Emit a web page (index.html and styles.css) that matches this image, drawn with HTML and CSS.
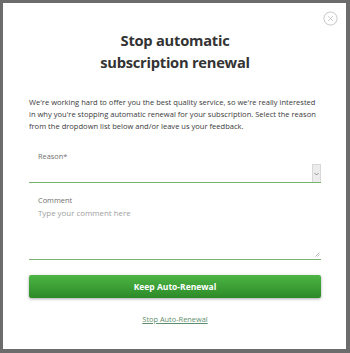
FILE: index.html
```html
<!DOCTYPE html>
<html>
<head>
<meta charset="utf-8">
<link rel="stylesheet" href="styles.css">
</head>
<body>
<div class="page">
  <div class="modal">
    <button class="close" aria-label="Close">
      <svg width="15" height="15" viewBox="0 0 15 15"><circle cx="7.5" cy="7.5" r="6.6" fill="none" stroke="#c8c8c8" stroke-width="1"/><path d="M5.2 5.2 L9.8 9.8 M9.8 5.2 L5.2 9.8" stroke="#c8c8c8" stroke-width="1" fill="none"/></svg>
    </button>
    <h1 class="title">Stop automatic<br>subscription renewal</h1>
    <p class="intro">We're working hard to offer you the best quality service, so we're really interested in why you're stopping automatic renewal for your subscription. Select the reason from the dropdown list below and/or leave us your feedback.</p>
    <div class="field select-field">
      <div class="label">Reason*</div>
      <div class="arrow"><svg width="5" height="4" viewBox="0 0 5 4"><path d="M0.5 1 L2.5 3 L4.5 1" fill="none" stroke="#888" stroke-width="0.9"/></svg></div>
    </div>
    <div class="field text-field">
      <div class="label">Comment</div>
      <div class="placeholder">Type your comment here</div>
      <div class="grip"><svg width="5" height="5" viewBox="0 0 5 5"><path d="M4.5 0.5 L0.5 4.5 M4.5 2.5 L2.5 4.5" stroke="#aaa" stroke-width="0.8"/></svg></div>
    </div>
    <button class="keep">Keep Auto-Renewal</button>
    <a class="stop" href="#">Stop Auto-Renewal</a>
  </div>
</div>
</body>
</html>
```
FILE: styles.css
```css
html, body {
  margin: 0;
  padding: 0;
}
body {
  background: #6c6c6c;
  width: 350px;
  height: 353px;
  overflow: hidden;
  font-family: "Open Sans", "Noto Sans", sans-serif;
}
.page {
  padding: 3px 4px 4px 3px;
}
.modal {
  position: relative;
  background: #fff;
  width: 343px;
  height: 346px;
  box-sizing: border-box;
  padding: 26px 25px 0 26px;
  display: flex;
  flex-direction: column;
}
.close {
  position: absolute;
  top: 8px;
  right: 8px;
  width: 15px;
  height: 15px;
  padding: 0;
  border: 0;
  background: none;
  display: flex;
}
.title {
  margin: 0;
  text-align: center;
  font-weight: 700;
  font-size: 14.7px;
  line-height: 22px;
  color: #333;
  letter-spacing: -0.25px;
}
.intro {
  margin: 23px 0 0 0;
  font-size: 7.55px;
  line-height: 12px;
  color: #3a3a3a;
}
.field {
  position: relative;
  border-bottom: 1px solid #7ab36f;
}
.select-field {
  margin-top: 15px;
  height: 35px;
}
.label {
  padding: 12px 0 0 9px;
  font-size: 7.4px;
  line-height: 10px;
  color: #707070;
}
.select-field .label {
  padding-top: 4px;
}
.arrow {
  position: absolute;
  right: 0;
  bottom: 0;
  width: 9px;
  height: 18px;
  background: #ececec;
  border: 1px solid #d8d8d8;
  border-bottom: 0;
  box-sizing: border-box;
  display: flex;
  align-items: center;
  justify-content: center;
}
.text-field {
  height: 76px;
}
.placeholder {
  padding: 3px 0 0 9px;
  font-size: 7.9px;
  line-height: 10px;
  color: #a0a0a0;
}
.grip {
  position: absolute;
  right: 1px;
  bottom: 2px;
  display: flex;
}
.keep {
  margin-top: 15px;
  height: 23px;
  border: 0;
  border-radius: 2px;
  background: linear-gradient(#4db545, #2d8a28);
  box-shadow: 0 1px 3px rgba(0,0,0,0.35);
  color: #fff;
  font-family: "Open Sans", "Noto Sans", sans-serif;
  font-weight: 700;
  font-size: 8.5px;
  padding: 0;
}
.stop {
  margin-top: 16px;
  align-self: center;
  font-size: 7.4px;
  line-height: 10px;
  color: #5f8f6e;
  text-decoration: underline;
}
```
